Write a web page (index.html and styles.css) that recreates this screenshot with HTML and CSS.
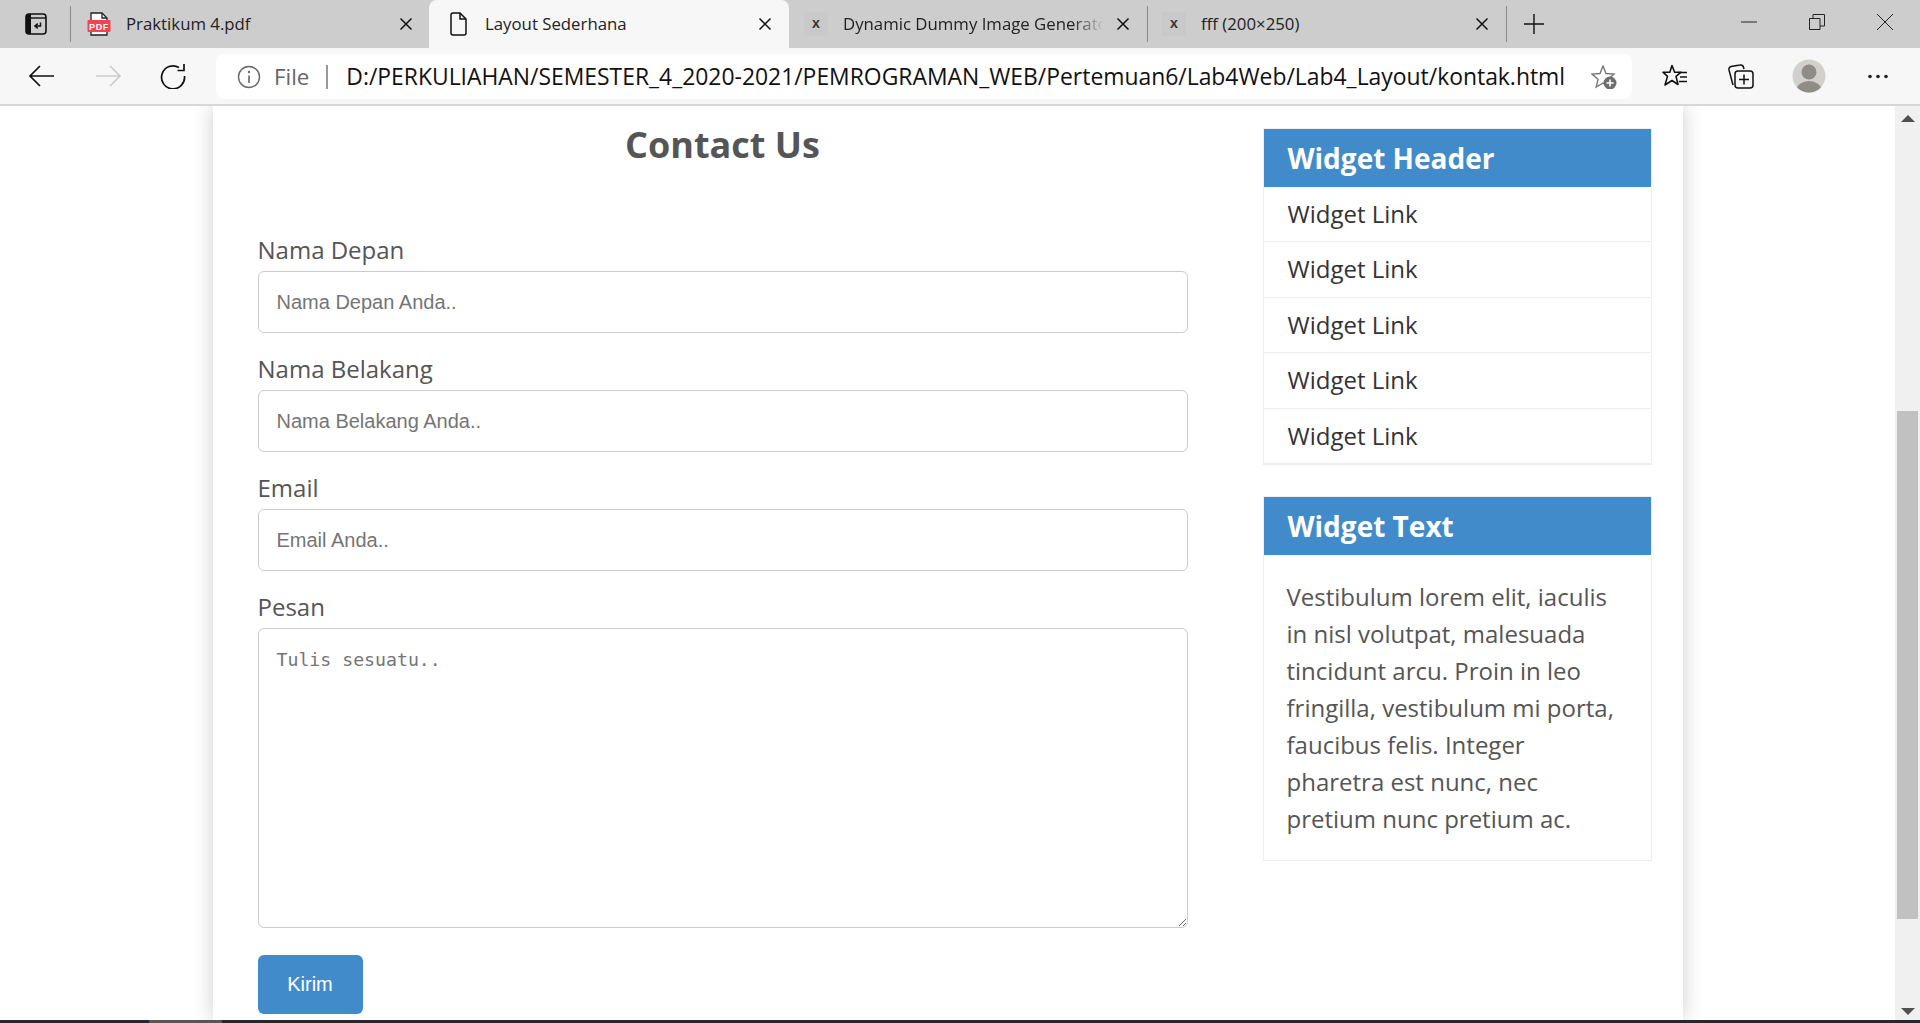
FILE: index.html
```html
<!DOCTYPE html>
<html lang="id">
<head>
<meta charset="utf-8">
<title>Layout Sederhana</title>
<link rel="stylesheet" href="styles.css">
</head>
<body>
<div class="browser">
  <div class="tabstrip">
    <div class="tab-action">
      <svg width="22" height="22" viewBox="0 0 22 22"><rect x="1" y="1" width="20" height="20" rx="3" fill="none" stroke="#111" stroke-width="1.6"/><path d="M1 4a3 3 0 0 1 3-3h2v20H4a3 3 0 0 1-3-3z" fill="#111"/><path d="M1 5h20" stroke="#111" stroke-width="1.4"/><path d="M15.5 9.500v3.500h-5M12.800 10.700 10 13l2.800 2.300" fill="none" stroke="#111" stroke-width="1.500"/></svg>
    </div>
    <span class="tab-sep"></span>
    <div class="tab tab-pdf">
      <svg class="fav" width="24" height="24" viewBox="0 0 24 24"><path d="M4 1h11l5 5v17H4z" fill="#fff" stroke="#222" stroke-width="1.300"/><path d="M15 1v5h5" fill="none" stroke="#222" stroke-width="1.300"/><rect x="0.500" y="8" width="23" height="12" rx="1" fill="#f2444d"/><text x="12" y="17.500" class="pdf-text" text-anchor="middle">PDF</text></svg>
      <span class="tab-title">Praktikum 4.pdf</span>
      <svg class="tab-x" width="14" height="14" viewBox="0 0 14 14"><path d="M1.500 1.500l11 11M12.500 1.500l-11 11"/></svg>
    </div>
    <div class="tab tab-active">
      <svg class="fav" width="24" height="24" viewBox="0 0 24 24"><path d="M5 3a2 2 0 0 1 2-2h7l6 6v14a2 2 0 0 1-2 2H7a2 2 0 0 1-2-2z" fill="none" stroke="#111" stroke-width="1.500"/><path d="M14 1v6h6" fill="none" stroke="#111" stroke-width="1.500"/></svg>
      <span class="tab-title">Layout Sederhana</span>
      <svg class="tab-x" width="14" height="14" viewBox="0 0 14 14"><path d="M1.500 1.500l11 11M12.500 1.500l-11 11"/></svg>
    </div>
    <div class="tab tab-dummy">
      <span class="fav-x">x</span>
      <span class="tab-title tab-fade">Dynamic Dummy Image Generator</span>
      <svg class="tab-x" width="14" height="14" viewBox="0 0 14 14"><path d="M1.500 1.500l11 11M12.500 1.500l-11 11"/></svg>
    </div>
    <span class="tab-sep"></span>
    <div class="tab tab-fff">
      <span class="fav-x">x</span>
      <span class="tab-title">fff (200×250)</span>
      <svg class="tab-x" width="14" height="14" viewBox="0 0 14 14"><path d="M1.500 1.500l11 11M12.500 1.500l-11 11"/></svg>
    </div>
    <span class="tab-sep"></span>
    <svg class="new-tab" width="20" height="20" viewBox="0 0 20 20"><path d="M10 0v20M0 10h20" stroke="#111" stroke-width="1.400" fill="none"/></svg>
    <div class="window-controls">
      <svg width="16" height="16" viewBox="0 0 16 16"><path d="M0 8h16" stroke="#222" stroke-width="1"/></svg>
      <svg width="16" height="16" viewBox="0 0 16 16"><path d="M.5 4.500h10.500v11H.5zM4 4.500V.5h11.500V12H11" fill="none" stroke="#222" stroke-width="1"/></svg>
      <svg width="16" height="16" viewBox="0 0 16 16"><path d="M0 0l16 16M16 0L0 16" stroke="#222" stroke-width="1"/></svg>
    </div>
  </div>
  <div class="toolbar">
    <svg class="nav-back" width="30" height="26" viewBox="0 0 30 26"><path d="M26 13H2M12 3 2 13l10 10" fill="none" stroke="#111" stroke-width="1.700"/></svg>
    <svg class="nav-forward" width="30" height="26" viewBox="0 0 30 26"><path d="M2 13h24M16 3l10 10-10 10" fill="none" stroke="#ccc" stroke-width="1.700"/></svg>
    <svg class="nav-reload" width="26" height="26" viewBox="0 0 26 26"><path d="M19 4.500A11.500 11.500 0 1 0 24.500 13M24 1v6.500h-6.500" fill="none" stroke="#111" stroke-width="1.700"/></svg>
    <div class="addressbar">
      <svg class="info" width="24" height="24" viewBox="0 0 24 24"><circle cx="12" cy="12" r="10.500" fill="none" stroke="#666" stroke-width="1.400"/><path d="M12 10.500v7.500" stroke="#666" stroke-width="1.600"/><circle cx="12" cy="7" r="1.200" fill="#666"/></svg>
      <span class="scheme">File</span>
      <span class="addr-sep"></span>
      <span class="url">D:/PERKULIAHAN/SEMESTER_4_2020-2021/PEMROGRAMAN_WEB/Pertemuan6/Lab4Web/Lab4_Layout/kontak.html</span>
      <svg class="addr-star" width="26" height="24" viewBox="0 0 26 24"><path d="M12 1l3 7.500 8 .6-6 5.200 1.800 7.800L12 18l-6.800 4.100L7 14.300 1 9.100l8-.6z" fill="none" stroke="#777" stroke-width="1.400"/><circle cx="19" cy="18" r="6.500" fill="#6e6e6e"/><path d="M19 14.500v7M15.500 18h7" stroke="#fff" stroke-width="1.600"/></svg>
    </div>
    <svg class="tool-fav" width="26" height="24" viewBox="0 0 26 24"><path d="M10 1.500l2.600 6.700H19l-5 4.200 2 8.100-6-4-7 4.500 2.500-8.600L1 8.200h6.800z" fill="none" stroke="#111" stroke-width="1.600" stroke-linejoin="round"/><path d="M17 8.500h8M18 13h7M17 17.500h8" stroke="#111" stroke-width="1.500"/></svg>
    <svg class="tool-coll" width="26" height="25" viewBox="0 0 26 25"><path d="M5 21 1 6a3 3 0 0 1 2-3.500L12 1a3 3 0 0 1 3.500 2.200L16 5" fill="none" stroke="#111" stroke-width="1.500"/><rect x="7" y="7" width="18" height="17" rx="3" fill="none" stroke="#111" stroke-width="1.500"/><path d="M16 10.500v10M11 15.500h10" stroke="#111" stroke-width="1.500"/></svg>
    <svg class="avatar" width="34" height="34" viewBox="0 0 34 34"><clipPath id="av"><circle cx="17" cy="17" r="16.500"/></clipPath><circle cx="17" cy="17" r="16.500" fill="#d1d0cc"/><circle cx="17" cy="13" r="7.500" fill="#8f8c87"/><ellipse cx="17" cy="31" rx="12.500" ry="9" fill="#8f8c87" clip-path="url(#av)"/></svg>
    <svg class="more" width="20" height="5" viewBox="0 0 20 5"><circle cx="2" cy="2.500" r="1.800" fill="#222"/><circle cx="10" cy="2.500" r="1.800" fill="#222"/><circle cx="18" cy="2.500" r="1.800" fill="#222"/></svg>
  </div>
  <div class="viewport">
    <div class="page-scroll">
      <div class="page">
        <main class="content">
          <h1 class="title">Contact Us</h1>
          <form class="form">
            <div class="field">
              <label class="label" for="fn">Nama Depan</label>
              <input class="input" id="fn" type="text" placeholder="Nama Depan Anda..">
            </div>
            <div class="field">
              <label class="label" for="ln">Nama Belakang</label>
              <input class="input" id="ln" type="text" placeholder="Nama Belakang Anda..">
            </div>
            <div class="field">
              <label class="label" for="em">Email</label>
              <input class="input" id="em" type="text" placeholder="Email Anda..">
            </div>
            <div class="field">
              <label class="label" for="ps">Pesan</label>
              <textarea class="textarea" id="ps" placeholder="Tulis sesuatu.."></textarea>
            </div>
            <button class="submit" type="button">Kirim</button>
          </form>
        </main>
        <aside class="sidebar">
          <section class="widget">
            <h2 class="widget-head">Widget Header</h2>
            <ul class="widget-links">
              <li class="widget-link">Widget Link</li>
              <li class="widget-link">Widget Link</li>
              <li class="widget-link">Widget Link</li>
              <li class="widget-link">Widget Link</li>
              <li class="widget-link">Widget Link</li>
            </ul>
          </section>
          <section class="widget">
            <h2 class="widget-head">Widget Text</h2>
            <p class="widget-text">Vestibulum lorem elit, iaculis in nisl volutpat, malesuada tincidunt arcu. Proin in leo fringilla, vestibulum mi porta, faucibus felis. Integer pharetra est nunc, nec pretium nunc pretium ac.</p>
          </section>
        </aside>
      </div>
    </div>
    <div class="scrollbar">
      <svg class="arrow" width="14" height="7" viewBox="0 0 14 7"><path d="M7 0l7 7H0z" fill="#505050"/></svg>
      <div class="track"><div class="thumb"></div></div>
      <svg class="arrow" width="14" height="7" viewBox="0 0 14 7"><path d="M7 7l7-7H0z" fill="#505050"/></svg>
    </div>
  </div>
  <div class="taskbar"><span class="taskbar-item"></span></div>
</div>
</body>
</html>
```
FILE: styles.css
```css
* { box-sizing: border-box; }
html, body { margin: 0; height: 100%; overflow: hidden; }
body { font-family: "Open Sans", sans-serif; color: #555; background: #fff; }
.browser { height: 100vh; display: flex; flex-direction: column; }

.tabstrip { height: 48px; flex: none; background: #cdcdcd; display: flex; align-items: center; }
.tab-action { width: 70px; height: 48px; padding-left: 25px; display: flex; align-items: center; flex: none; }
.tab-sep { width: 1px; height: 36px; background: #8a8a8a; flex: none; }
.tab { height: 48px; display: flex; align-items: center; flex: none; }
.tab-pdf { width: 358px; padding: 0 16px 0 16px; }
.tab-active { width: 360px; padding: 0 17px 0 17px; background: #f7f7f7; border-radius: 8px 8px 0 0; }
.tab-dummy { width: 358px; padding: 0 17px 0 15px; }
.tab-fff { width: 358px; padding: 0 17px 0 14px; }
.fav { flex: none; }
.fav-x { width: 24px; height: 24px; background: #c9c9c9; color: #333; font: bold 14px "Liberation Mono", monospace; display: flex; align-items: center; justify-content: center; flex: none; }
.pdf-text { font: bold 9px "Liberation Sans", sans-serif; fill: #fff; letter-spacing: .6px; }
.tab-title { font: 16.800px/48px "Open Sans", sans-serif; color: #222; margin-left: 15px; flex: 1; white-space: nowrap; overflow: hidden; min-width: 0; }
.tab-fade { margin-right: 12px; -webkit-mask-image: linear-gradient(to right, #000 88%, transparent 100%); mask-image: linear-gradient(to right, #000 88%, transparent 100%); }
.tab-x { fill: none; stroke: #111; stroke-width: 1.500; flex: none; }
.new-tab { margin-left: 17px; flex: none; }
.window-controls { margin-left: auto; display: flex; gap: 52px; padding-right: 27px; margin-top: -4px; }

.toolbar { height: 58px; flex: none; background: #f7f7f7; border-bottom: 2px solid #d7d7d7; display: flex; align-items: center; padding-left: 28px; }
.nav-forward { margin-left: 36px; }
.nav-reload { margin-left: 36px; }
.addressbar { width: 1416px; height: 45px; margin-left: 30px; margin-top: 1px; background: #fff; border-radius: 8px; display: flex; align-items: center; padding-left: 21px; flex: none; }
.info { flex: none; }
.scheme { font-size: 22.300px; color: #666; margin-left: 13px; }
.addr-sep { width: 2px; height: 24px; background: #999; margin: 0 18px 0 17px; flex: none; }
.url { font-size: 22.900px; color: #111; white-space: nowrap; }
.addr-star { margin-left: 26px; flex: none; }
.tool-fav { margin-left: 30px; flex: none; }
.tool-coll { margin-left: 40px; flex: none; }
.avatar { margin-left: 38px; flex: none; }
.more { margin-left: 42px; flex: none; }

.viewport { flex: 1; min-height: 0; display: flex; }
.page-scroll { flex: 1; min-width: 0; overflow: hidden; }
.page { width: 1470px; height: 100%; margin: 0 auto; background: #fff; box-shadow: 0 0 20px rgba(0,0,0,.2); display: flex; padding: 0 32px 0 45px; }
.content { width: 930px; flex: none; }
.title { margin: 15px 0 0; font-size: 36px; line-height: 48px; font-weight: 700; color: #555; text-align: center; }
.form { margin-top: 65px; display: flex; flex-direction: column; }
.field { display: flex; flex-direction: column; margin-bottom: 20px; }
.label { font-size: 24px; line-height: 31px; color: #555; height: 37px; }
.input, .textarea { width: 100%; border: 1.500px solid #ccc; border-radius: 6px; background: #fff; padding: 0 18px; display: block; color: #333; }
.input { height: 62px; font: 20px "Liberation Sans", sans-serif; }
.textarea { height: 300px; padding-top: 20px; font: 18.200px/1.200 "DejaVu Sans Mono", monospace; resize: vertical; }
.input::placeholder, .textarea::placeholder { color: #757575; opacity: 1; }
.submit { width: 105px; height: 59px; margin-top: 7px; border: 0; border-radius: 6px; background: #428bca; color: #fff; font: 20px "Liberation Sans", sans-serif; }

.sidebar { width: 389px; margin-left: 75px; padding-top: 22px; flex: none; display: flex; flex-direction: column; gap: 31px; }
.widget { border: 1px solid #eee; }
.widget-head { margin: 0; height: 58px; background: #428bca; color: #fff; font-size: 28px; line-height: 58px; font-weight: 700; padding-left: 24px; }
.widget-links { list-style: none; margin: 0; padding: 0; }
.widget-link { height: 55.400px; line-height: 54px; font-size: 24px; color: #333; padding-left: 24px; border-bottom: 1.500px solid #eee; }
.widget-text { margin: 0; padding: 23px 22px 23px 23px; font-size: 24px; line-height: 37px; color: #555; }

.scrollbar { width: 25px; flex: none; background: #f0f0f0; display: flex; flex-direction: column; align-items: center; padding: 9px 0 5px; }
.arrow { flex: none; }
.track { flex: 1; width: 21px; position: relative; }
.thumb { position: absolute; left: 0; right: 0; top: 289px; height: 508px; background: #c1c1c1; }

.taskbar { height: 3px; flex: none; background: #1f2a30; padding-left: 149px; }
.taskbar-item { display: block; width: 73px; height: 3px; background: #525858; }
```
